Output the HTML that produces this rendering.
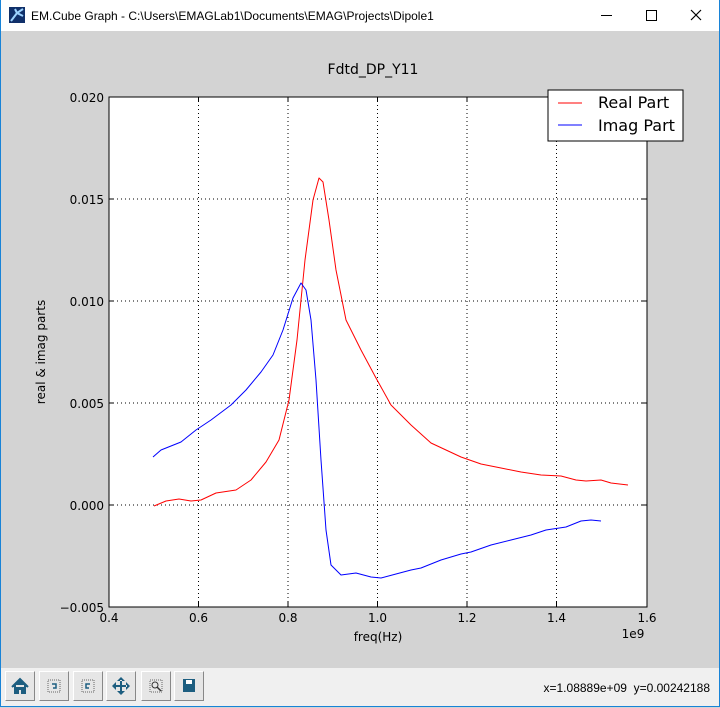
<!DOCTYPE html>
<html><head><meta charset="utf-8"><style>
body{margin:0;width:720px;height:708px;overflow:hidden;font-family:"Liberation Sans",sans-serif;background:#d3d3d3;position:relative}
#win{position:absolute;left:0;top:0;width:718px;height:706px;border:1px solid #1883d7;border-top:none;background:#d3d3d3}
#title{position:absolute;left:0;top:0;width:718px;height:31px;background:#fff;font-size:12px}
#tb{position:absolute;left:0;top:668px;width:718px;height:38px;background:#f0f0f0}
.btn{position:absolute;top:3px;width:30px;height:30px;background:#e6e6e6;border:1px solid #fff;border-right-color:#888;border-bottom-color:#888;box-sizing:border-box}
</style></head><body>
<div id="win">
<div id="title">
<svg width="18" height="18" style="position:absolute;left:8px;top:7px"><rect width="16" height="16" fill="#10306a"/><path d="M2 14 L8 6 L14 2 M8 6 L6 2 M8 6 L14 9" stroke="#9cd3ff" stroke-width="2" fill="none"/></svg>
<span style="position:absolute;left:30px;top:9px;color:#000">EM.Cube Graph - C:\Users\EMAGLab1\Documents\EMAG\Projects\Dipole1</span>
<div style="position:absolute;left:600px;top:15px;width:11px;height:1px;background:#000"></div>
<div style="position:absolute;left:645px;top:10px;width:9px;height:9px;border:1px solid #000"></div>
<svg style="position:absolute;left:689px;top:9px" width="12" height="12"><path d="M1 1L11 11M11 1L1 11" stroke="#000" stroke-width="1.2"/></svg>
</div>
<svg style="position:absolute;left:0;top:0" width="718" height="668" font-family="DejaVu Sans, sans-serif" font-size="12">
<text x="372" y="74" text-anchor="middle" font-size="14">Fdtd_DP_Y11</text>
<rect x="108" y="97" width="538" height="510" fill="#fff" stroke="#000"/>
<g stroke="#000" stroke-dasharray="1,3" stroke-width="1">
<path d="M197.5 97V607M287 97V607M376.5 97V607M466 97V607M555.5 97V607M108 199H646M108 301H646M108 403H646M108 505H646"/>
</g>
<g stroke="#000"><path d="M197.5 97v5M287 97v5M376.5 97v5M466 97v5M555.5 97v5M197.5 607v-5M287 607v-5M376.5 607v-5M466 607v-5M555.5 607v-5M108 199h5M108 301h5M108 403h5M108 505h5M646 199h-5M646 301h-5M646 403h-5M646 505h-5"/></g>
<g text-anchor="end"><text x="103" y="102">0.020</text><text x="103" y="204">0.015</text><text x="103" y="306">0.010</text><text x="103" y="408">0.005</text><text x="103" y="510">0.000</text><text x="103" y="612">−0.005</text></g>
<g text-anchor="middle"><text x="108" y="622">0.4</text><text x="197.5" y="622">0.6</text><text x="287" y="622">0.8</text><text x="376.5" y="622">1.0</text><text x="466" y="622">1.2</text><text x="555.5" y="622">1.4</text><text x="646" y="622">1.6</text><text x="632" y="638">1e9</text><text x="377" y="641">freq(Hz)</text></g>
<text transform="translate(44,352) rotate(-90)" text-anchor="middle">real &amp; imag parts</text>
<polyline fill="none" stroke="#ff0000" stroke-linejoin="round" points="153,506 165,501 178,499 190,501 200,500 215,493 235,490 250,480 265,462 278,440 288,400 296,340 304,260 312,200 318,178 322,182 328,220 335,270 345,320 360,350 375,378 390,405 410,425 430,443 445,450 460,457 480,464 500,468 520,472 540,475 560,476 575,480 585,481 600,480 610,483 627,485"/>
<polyline fill="none" stroke="#0000ff" stroke-linejoin="round" points="152,457 160,450 170,446 180,442 195,430 210,420 230,405 245,390 260,372 272,355 282,330 292,298 300,283 305,290 310,320 315,380 320,460 325,530 330,565 340,575 355,573 370,577 380,578 395,574 410,570 420,568 440,560 460,554 470,552 490,545 510,540 530,535 545,530 565,527 580,521 590,520 600,521"/>
<rect x="547" y="90" width="135" height="51" fill="#fff" stroke="#000"/>
<path d="M557 103H581" stroke="#ff0000"/><path d="M557 125H581" stroke="#0000ff"/>
<text x="597" y="108" font-size="16">Real Part</text><text x="597" y="131" font-size="16">Imag Part</text>
</svg>
<div id="tb">
<div class="btn" style="left:4px"><svg width="28" height="28"><path d="M6 15L14 7L22 15M9 13V21H12V17H16V21H19V13" fill="#1d5e80" stroke="#1d5e80" stroke-width="2"/></svg></div>
<div class="btn" style="left:38px"><svg width="28" height="28"><rect x="8" y="8" width="12" height="12" fill="none" stroke="#666" stroke-dasharray="1,1"/><path d="M12 12h4v4h-3" stroke="#1d5e80" stroke-width="1.5" fill="none"/></svg></div>
<div class="btn" style="left:72px"><svg width="28" height="28"><rect x="8" y="8" width="12" height="12" fill="none" stroke="#666" stroke-dasharray="1,1"/><path d="M16 12h-4v4h3" stroke="#1d5e80" stroke-width="1.5" fill="none"/></svg></div>
<div class="btn" style="left:105px"><svg width="28" height="28"><path d="M14 5L10 9H18ZM14 23L10 19H18ZM5 14L9 10V18ZM23 14L19 10V18ZM13 8h2v12h-2zM8 13h12v2H8z" fill="#1d5e80"/></svg></div>
<div class="btn" style="left:140px"><svg width="28" height="28"><rect x="8" y="8" width="12" height="12" fill="none" stroke="#666" stroke-dasharray="1,1"/><circle cx="13" cy="13" r="3" fill="none" stroke="#333"/><path d="M15 15l4 4" stroke="#333" stroke-width="1.5"/></svg></div>
<div class="btn" style="left:173px"><svg width="28" height="28"><rect x="8" y="7" width="12" height="13" fill="#1d5e80"/><rect x="11" y="8" width="6" height="4" fill="#fff"/></svg></div>
<span style="position:absolute;right:9px;top:13px;font-size:12px">x=1.08889e+09&nbsp; y=0.00242188</span>
</div>
</div>
</body></html>
